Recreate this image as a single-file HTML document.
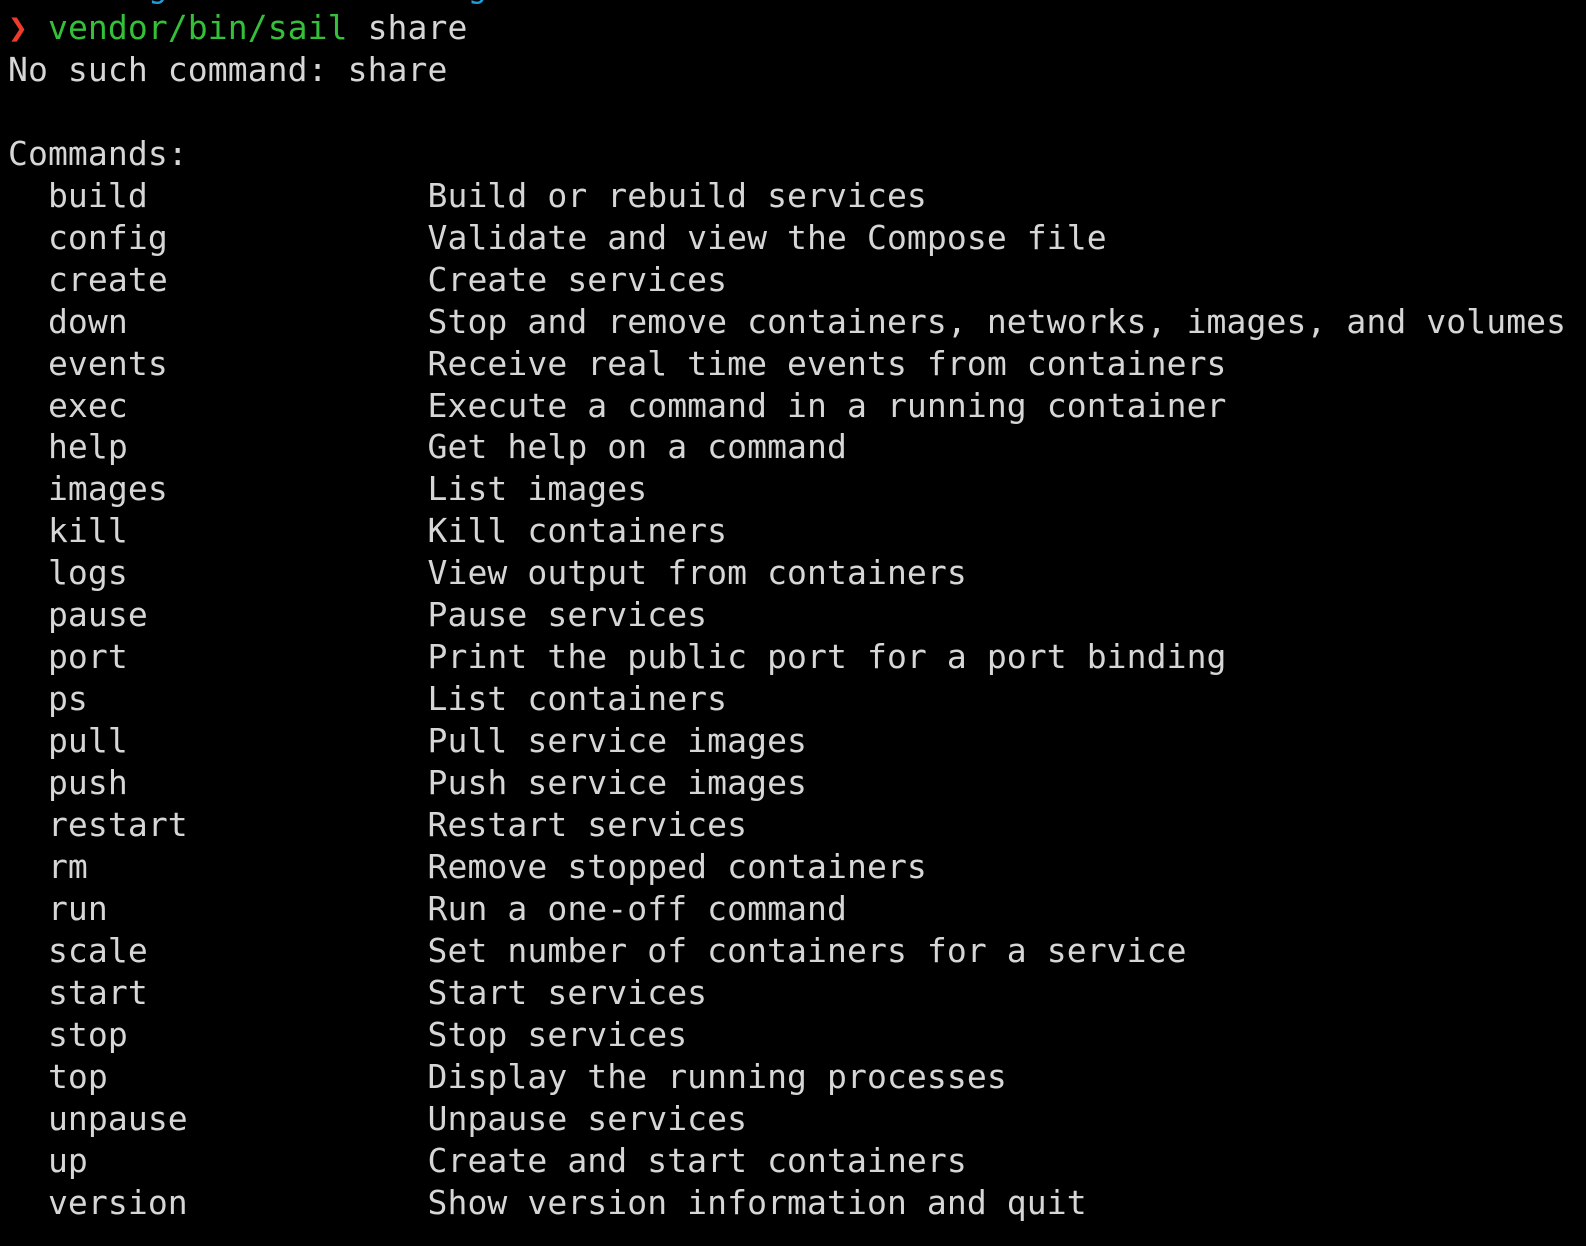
<!DOCTYPE html>
<html><head><meta charset="utf-8"><style>
html,body{margin:0;padding:0;background:#000;width:1586px;height:1246px;overflow:hidden}
pre{position:absolute;left:8px;top:-35px;margin:0;font-family:"DejaVu Sans Mono","Liberation Mono",monospace;font-size:33.05px;letter-spacing:0.08px;line-height:41.95px;color:#d6d6d6}
.b{color:#1e9ee0}.r{color:#ef3b2c}.g{color:#35c03a}
</style></head><body><pre><span class="b">       g               g</span>
<span class="r">❯</span> <span class="g">vendor/bin/sail</span> share
No such command: share

Commands:
  build              Build or rebuild services
  config             Validate and view the Compose file
  create             Create services
  down               Stop and remove containers, networks, images, and volumes
  events             Receive real time events from containers
  exec               Execute a command in a running container
  help               Get help on a command
  images             List images
  kill               Kill containers
  logs               View output from containers
  pause              Pause services
  port               Print the public port for a port binding
  ps                 List containers
  pull               Pull service images
  push               Push service images
  restart            Restart services
  rm                 Remove stopped containers
  run                Run a one-off command
  scale              Set number of containers for a service
  start              Start services
  stop               Stop services
  top                Display the running processes
  unpause            Unpause services
  up                 Create and start containers
  version            Show version information and quit</pre></body></html>
